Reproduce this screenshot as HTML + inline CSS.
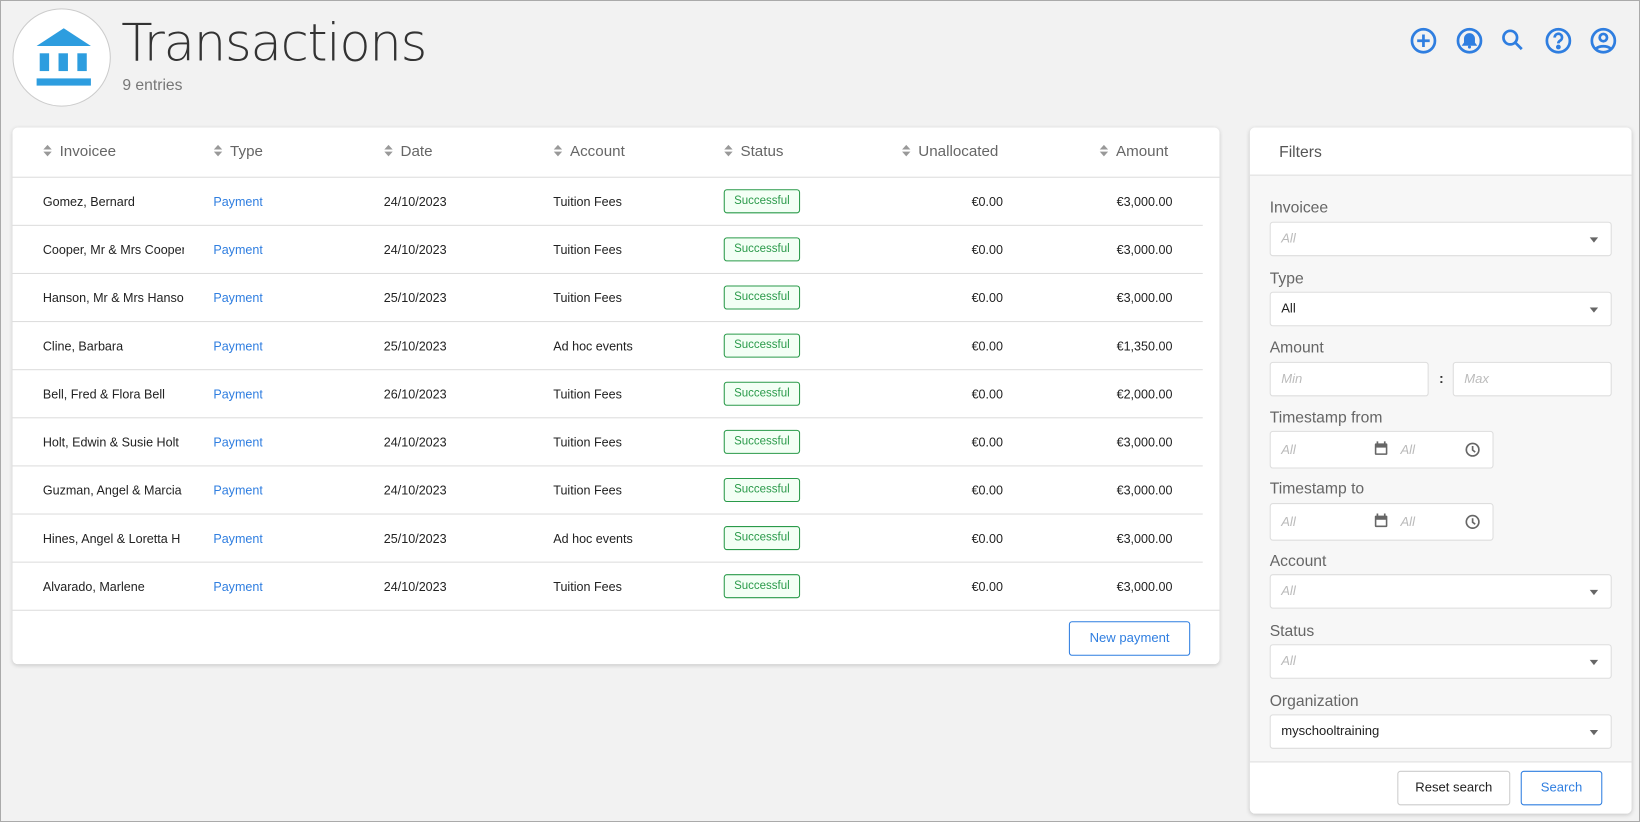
<!DOCTYPE html>
<html><head><meta charset="utf-8"><style>
*{box-sizing:border-box;margin:0;padding:0}
html,body{width:1640px;height:822px;overflow:hidden}
body{background:#f2f2f2;font-family:"Liberation Sans",sans-serif;position:relative;border:1px solid #aaa}
#w{position:absolute;left:0;top:0;width:1568px;height:786px;transform:scale(1.04592);transform-origin:0 0}
.a{position:absolute}
.card{position:absolute;background:#fff;border-radius:5px;box-shadow:0 1px 4px rgba(0,0,0,.18)}
.th{position:absolute;top:136px;font-size:14.5px;color:#666}
.si{display:inline-block;width:9px;height:12px;margin-right:7px;vertical-align:-1px}
.td{position:absolute;font-size:12px;color:#222;white-space:nowrap;overflow:hidden}
.blue{color:#2f7ee0}
.badge{position:absolute;width:73px;height:23px;border:1px solid #2a9a4a;border-radius:3px;background:#f3fff5;color:#2a9a4a;font-size:11px;text-align:center;line-height:21px}
.line{position:absolute;left:11px;width:1138px;height:1px;background:#ddd}
.lbl{position:absolute;left:1213px;font-size:15px;color:#666}
.inp{position:absolute;background:#fff;border:1px solid #ddd;border-radius:3px;font-size:12.5px;color:#bbb;font-style:italic;padding-left:10px;line-height:31px;height:33px}
.car{position:absolute;right:12px;top:14px;border-left:4px solid transparent;border-right:4px solid transparent;border-top:5px solid #666}
.btn{position:absolute;height:33px;border-radius:3px;background:#fff;font-size:12.5px;text-align:center;line-height:31px}
</style></head><body><div id="w">
<div class="a" style="left:11px;top:7px;width:94px;height:94px;border-radius:50%;background:#fff;border:1px solid #ccc"></div>
<svg class="a" style="left:34px;top:25px" width="52" height="56" viewBox="0 0 52 56"><path d="M0 18 L26 1 L52 18 Z" fill="#2d9ddf"/><rect x="3" y="25" width="9" height="17" fill="#2d9ddf"/><rect x="21" y="25" width="9" height="17" fill="#2d9ddf"/><rect x="39" y="25" width="9" height="17" fill="#2d9ddf"/><rect x="0" y="49" width="52" height="7" fill="#2d9ddf"/></svg>
<div class="a" style="left:115px;top:12px;font-size:49px;color:#333;letter-spacing:-1.2px;font-family:'DejaVu Sans','Liberation Sans',sans-serif;font-weight:200">Transactions</div>
<div class="a" style="left:116px;top:72px;font-size:15px;color:#777">9 entries</div>
<svg class="a" style="left:1345px;top:24px" width="210" height="30" viewBox="0 0 210 30" fill="none" stroke="#2f7ee0" stroke-width="2.6">
<circle cx="15" cy="14" r="11"/><path d="M15 8v12M9 14h12"/>
<circle cx="59" cy="14" r="11"/><path d="M53 18h12l-1.5-2v-4a4.5 4.5 0 0 0-9 0v4z" fill="#2f7ee0" stroke-width="1.5"/><circle cx="59" cy="20" r="1.5" fill="#2f7ee0" stroke="none"/>
<circle cx="98" cy="11" r="6.5"/><path d="M103 16l6 6"/>
<circle cx="144" cy="14" r="11"/><path d="M140.5 11a3.5 3.5 0 1 1 5 3c-1 .6-1.5 1.3-1.5 2.5"/><circle cx="144" cy="20" r="1" fill="#2f7ee0"/>
<circle cx="187" cy="14" r="11"/><circle cx="187" cy="11" r="3.5"/><path d="M180 21.5a9 6 0 0 1 14 0"/>
</svg>

<div class="card" style="left:11px;top:121px;width:1154px;height:513px"></div>
<div class="a" style="left:11px;top:168px;width:1154px;height:1px;background:#ddd"></div>
<div class="a" style="left:11px;top:582px;width:1154px;height:1px;background:#ddd"></div>
<svg width="0" height="0" style="position:absolute"><defs><symbol id="s" viewBox="0 0 9 12"><path d="M0.5 5L4.5 0.5L8.5 5Z M0.5 7L4.5 11.5L8.5 7Z" fill="#999"/></symbol></defs></svg>
<div class="th" style="left:40px"><svg class="si"><use href="#s"/></svg>Invoicee</div>
<div class="th" style="left:203px"><svg class="si"><use href="#s"/></svg>Type</div>
<div class="th" style="left:366px"><svg class="si"><use href="#s"/></svg>Date</div>
<div class="th" style="left:528px"><svg class="si"><use href="#s"/></svg>Account</div>
<div class="th" style="left:691px"><svg class="si"><use href="#s"/></svg>Status</div>
<div class="th" style="left:861px"><svg class="si"><use href="#s"/></svg>Unallocated</div>
<div class="th" style="left:1050px"><svg class="si"><use href="#s"/></svg>Amount</div>
<div id="rows"></div>
<div class="btn" style="left:1021px;top:593px;width:116px;border:1px solid #2f7ee0;color:#2f7ee0">New payment</div>

<div class="card" style="left:1194px;top:121px;width:365px;height:656px;background:#f7f7f7;overflow:hidden">
<div style="height:46px;background:#fff;border-bottom:1px solid #ddd;font-size:15px;color:#555;padding:15px 0 0 28px">Filters</div>
<div style="position:absolute;top:606px;left:0;right:0;bottom:0;background:#fff;border-top:1px solid #ddd"></div>
</div>
<div class="lbl" style="top:189px">Invoicee</div>
<div class="inp" style="left:1213px;top:211px;width:327px">All<div class="car"></div></div>
<div class="lbl" style="top:257px">Type</div>
<div class="inp" style="left:1213px;top:278px;width:327px;color:#222;font-style:normal">All<div class="car"></div></div>
<div class="lbl" style="top:323px">Amount</div>
<div class="inp" style="left:1213px;top:345px;width:152px">Min</div>
<div class="a" style="left:1375px;top:353px;font-size:13px;color:#333;font-weight:bold">:</div>
<div class="inp" style="left:1388px;top:345px;width:152px">Max</div>
<div class="lbl" style="top:390px">Timestamp from</div>
<div class="inp" style="left:1213px;top:411px;width:214px;height:36px;line-height:34px">All<span style="position:absolute;left:124px">All</span></div>
<div class="lbl" style="top:458px">Timestamp to</div>
<div class="inp" style="left:1213px;top:480px;width:214px;height:36px;line-height:34px">All<span style="position:absolute;left:124px">All</span></div>
<svg class="a" style="left:1312px;top:420px" width="110" height="90" viewBox="0 0 110 90" fill="none" stroke="#666" stroke-width="1.6">
<g><rect x="1.5" y="3" width="12" height="11" rx="1" fill="#666" stroke="none"/><rect x="3" y="7" width="9" height="5.5" fill="#fff" stroke="none"/><path d="M4 1v3M11 1v3"/><circle cx="95" cy="9" r="6"/><path d="M95 5.5v3.8l2.5 2"/></g>
<g transform="translate(0,69)"><rect x="1.5" y="3" width="12" height="11" rx="1" fill="#666" stroke="none"/><rect x="3" y="7" width="9" height="5.5" fill="#fff" stroke="none"/><path d="M4 1v3M11 1v3"/><circle cx="95" cy="9" r="6"/><path d="M95 5.5v3.8l2.5 2"/></g>
</svg>
<div class="lbl" style="top:527px">Account</div>
<div class="inp" style="left:1213px;top:548px;width:327px">All<div class="car"></div></div>
<div class="lbl" style="top:594px">Status</div>
<div class="inp" style="left:1213px;top:615px;width:327px">All<div class="car"></div></div>
<div class="lbl" style="top:661px">Organization</div>
<div class="inp" style="left:1213px;top:682px;width:327px;color:#222;font-style:normal">myschooltraining<div class="car"></div></div>
<div class="btn" style="left:1335px;top:736px;width:108px;border:1px solid #ccc;color:#222">Reset search</div>
<div class="btn" style="left:1453px;top:736px;width:78px;border:1px solid #2f7ee0;color:#2f7ee0">Search</div>
</div>
<script>
var d=[["Gomez, Bernard","24/10/2023","Tuition Fees","€3,000.00"],["Cooper, Mr & Mrs Cooper","24/10/2023","Tuition Fees","€3,000.00"],["Hanson, Mr & Mrs Hanson","25/10/2023","Tuition Fees","€3,000.00"],["Cline, Barbara","25/10/2023","Ad hoc events","€1,350.00"],["Bell, Fred & Flora Bell","26/10/2023","Tuition Fees","€2,000.00"],["Holt, Edwin & Susie Holt","24/10/2023","Tuition Fees","€3,000.00"],["Guzman, Angel & Marcia","24/10/2023","Tuition Fees","€3,000.00"],["Hines, Angel & Loretta H","25/10/2023","Ad hoc events","€3,000.00"],["Alvarado, Marlene","24/10/2023","Tuition Fees","€3,000.00"]];
var h="";d.forEach(function(r,i){var y=169+i*46,t=y+16;
h+='<div class="td" style="left:40px;top:'+t+'px;width:135px">'+r[0].replace(/&/g,'&amp;')+'</div><div class="td blue" style="left:203px;top:'+t+'px">Payment</div><div class="td" style="left:366px;top:'+t+'px">'+r[1]+'</div><div class="td" style="left:528px;top:'+t+'px">'+r[2]+'</div><div class="badge" style="left:691px;top:'+(y+11)+'px">Successful</div><div class="td" style="left:858px;width:100px;text-align:right;top:'+t+'px">€0.00</div><div class="td" style="left:1000px;width:120px;text-align:right;top:'+t+'px">'+r[3]+'</div>';
if(i<8)h+='<div class="line" style="top:'+(y+45)+'px"></div>';});
document.getElementById("rows").innerHTML=h;
</script>
</body></html>
